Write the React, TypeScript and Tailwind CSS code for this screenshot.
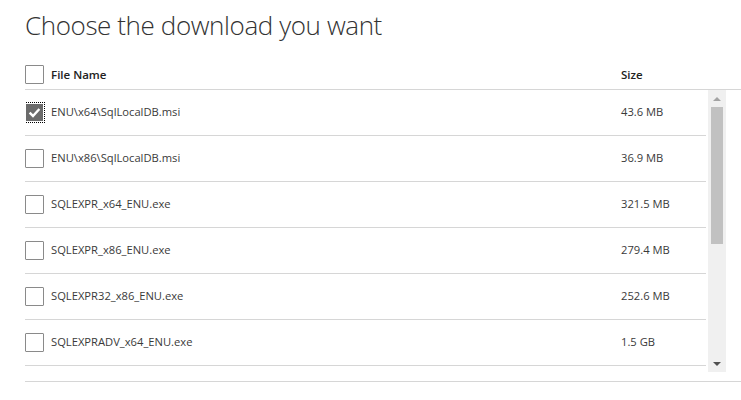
import React from 'react';

interface DownloadFile {
  name: string;
  size: string;
  checked?: boolean;
}

const files: DownloadFile[] = [
  { name: 'ENU\\x64\\SqlLocalDB.msi', size: '43.6 MB', checked: true },
  { name: 'ENU\\x86\\SqlLocalDB.msi', size: '36.9 MB' },
  { name: 'SQLEXPR_x64_ENU.exe', size: '321.5 MB' },
  { name: 'SQLEXPR_x86_ENU.exe', size: '279.4 MB' },
  { name: 'SQLEXPR32_x86_ENU.exe', size: '252.6 MB' },
  { name: 'SQLEXPRADV_x64_ENU.exe', size: '1.5 GB' },
];

const Checkbox: React.FC<{ checked?: boolean }> = ({ checked }) => {
  if (checked) {
    return (
      <span className="-ml-[1px] flex h-[21px] w-[21px] items-center justify-center border border-dotted border-black">
        <span className="flex h-[17px] w-[17px] items-center justify-center bg-[#6b6b6b]">
          <svg width="13" height="13" viewBox="0 0 12 12">
            <path d="M1.5 6.2 L4.6 9.2 L10.5 2.8" fill="none" stroke="white" strokeWidth="2.2" />
          </svg>
        </span>
      </span>
    );
  }
  return <span className="block h-[19px] w-[19px] rounded-[1px] border border-[#8a8a8a] bg-white" />;
};

export default function App() {
  return (
    <div
      className="h-[400px] w-[741px] overflow-hidden bg-white text-[#333]"
      style={{ fontFamily: '"Open Sans", "Noto Sans", sans-serif' }}
    >
      <div className="pl-[25px] pt-[5px]">
        {/* Title */}
        <h1 className="text-[26px] font-light leading-[40px] tracking-[-0.4px] text-[#333]">
          Choose the download you want
        </h1>

        <div className="w-[760px] pt-[15px]">
          {/* Header */}
          <div className="flex h-[30px] items-center border-b border-[#d6d6d6]">
            <div className="flex w-[26px] items-center">
              <Checkbox />
            </div>
            <div className="w-[570px] text-[11.5px] font-semibold text-[#222]">File Name</div>
            <div className="text-[11.5px] font-semibold text-[#222]">Size</div>
          </div>

          {/* Scroll area */}
          <div className="flex h-[282px] w-[701px] gap-[2px] overflow-hidden">
            <div className="flex-1">
              {files.map((f) => (
                <div key={f.name} className="flex h-[46px] items-center border-b border-[#d6d6d6]">
                  <div className="flex w-[26px] items-center">
                    <Checkbox checked={f.checked} />
                  </div>
                  <div className="w-[570px] text-[11.2px] text-[#3a3a3a]">{f.name}</div>
                  <div className="text-[11.2px] text-[#3a3a3a]">{f.size}</div>
                </div>
              ))}
            </div>

            {/* Scrollbar */}
            <div className="flex w-[18px] flex-col bg-[#f0f0f0]">
              <div className="flex h-[17px] items-center justify-center">
                <span className="h-0 w-0 border-x-[4px] border-b-[4px] border-x-transparent border-b-[#a3a3a3]" />
              </div>
              <div className="mx-[3px] h-[137px] bg-[#c1c1c1]" />
              <div className="flex-1" />
              <div className="flex h-[17px] items-center justify-center">
                <span className="h-0 w-0 border-x-[4px] border-t-[4px] border-x-transparent border-t-[#505050]" />
              </div>
            </div>
          </div>

          <div className="mt-[9px] border-b border-[#d6d6d6]" />
        </div>
      </div>
    </div>
  );
}
